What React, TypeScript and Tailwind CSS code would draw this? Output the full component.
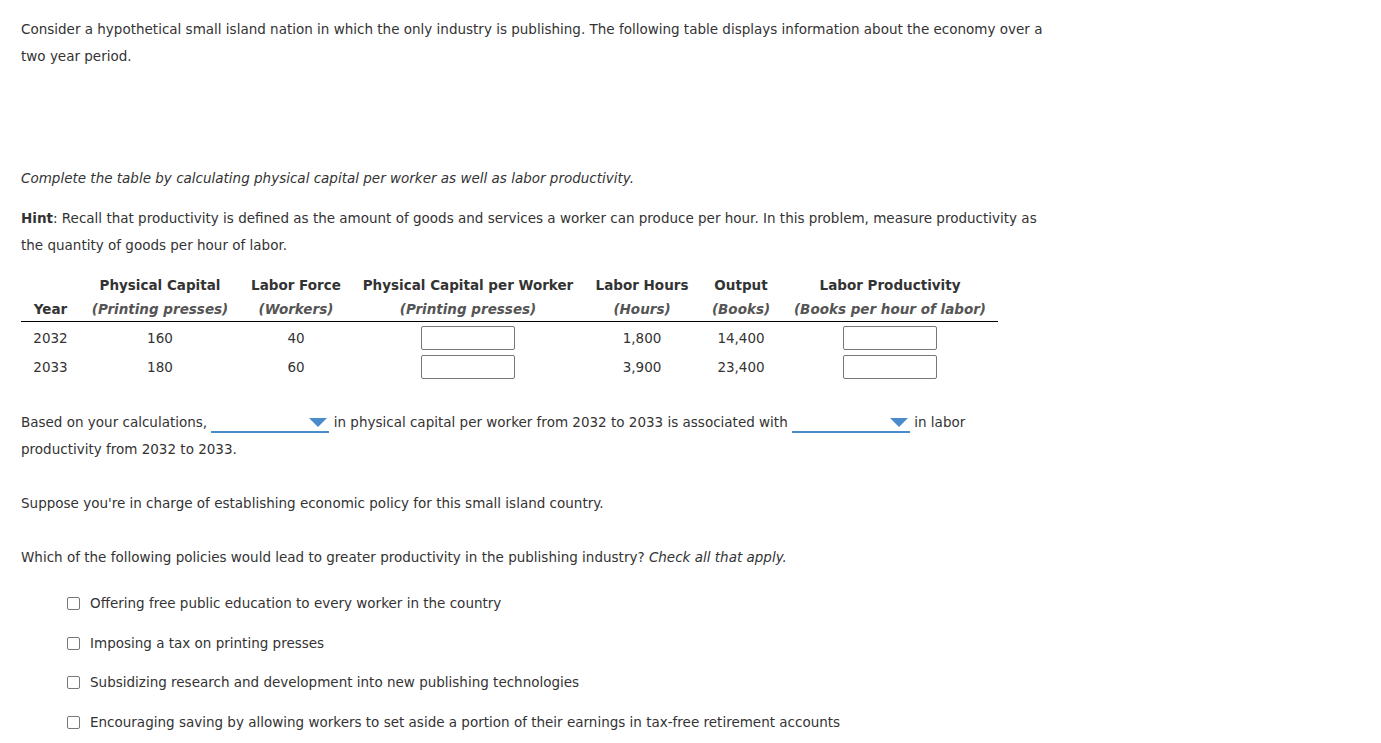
import React from 'react';

const Dropdown = () => (
  <span className="relative inline-block w-[118px] h-[18px] align-[-6px] border-b-2 border-[#4a8ccb]">
    <span className="absolute right-[2px] top-[3px] w-0 h-0 border-l-[9px] border-r-[9px] border-t-[9px] border-l-transparent border-r-transparent border-t-[#4a8ccb]" />
  </span>
);

const Box = () => (
  <div className="mx-auto w-[94px] h-[24px] border border-[#777] rounded-[2px] bg-white" />
);

const rows = [
  { year: '2032', cap: '160', lf: '40', hours: '1,800', out: '14,400' },
  { year: '2033', cap: '180', lf: '60', hours: '3,900', out: '23,400' },
];

const policies = [
  'Offering free public education to every worker in the country',
  'Imposing a tax on printing presses',
  'Subsidizing research and development into new publishing technologies',
  'Encouraging saving by allowing workers to set aside a portion of their earnings in tax-free retirement accounts',
];

export default function App() {
  return (
    <div className="min-h-screen bg-white text-[#333] text-[13.5px] leading-[27px] font-['DejaVu_Sans',Verdana,sans-serif] pl-[21px] pt-[16px]">
      <div className="w-[1024px]">
        <p>
          Consider a hypothetical small island nation in which the only industry is publishing. The following table displays information about the economy over a two year period.
        </p>

        <p className="mt-[95px] italic">Complete the table by calculating physical capital per worker as well as labor productivity.</p>

        <p className="mt-[13px]">
          <b>Hint</b>: Recall that productivity is defined as the amount of goods and services a worker can produce per hour. In this problem, measure productivity as the quantity of goods per hour of labor.
        </p>

        <table className="mt-[14px] border-collapse table-fixed w-[977px] text-center">
          <colgroup>
            <col className="w-[59px]" />
            <col className="w-[160px]" />
            <col className="w-[112px]" />
            <col className="w-[232px]" />
            <col className="w-[116px]" />
            <col className="w-[82px]" />
            <col className="w-[216px]" />
          </colgroup>
          <thead>
            <tr className="h-[24px] leading-[24px] font-bold">
              <th></th>
              <th>Physical Capital</th>
              <th>Labor Force</th>
              <th>Physical Capital per Worker</th>
              <th>Labor Hours</th>
              <th>Output</th>
              <th>Labor Productivity</th>
            </tr>
            <tr className="h-[24px] leading-[24px] border-b border-black">
              <th className="font-bold">Year</th>
              <th className="italic font-bold text-[#555]">(Printing presses)</th>
              <th className="italic font-bold text-[#555]">(Workers)</th>
              <th className="italic font-bold text-[#555]">(Printing presses)</th>
              <th className="italic font-bold text-[#555]">(Hours)</th>
              <th className="italic font-bold text-[#555]">(Books)</th>
              <th className="italic font-bold text-[#555]">(Books per hour of labor)</th>
            </tr>
          </thead>
          <tbody>
            {rows.map((r) => (
              <tr key={r.year} className="leading-[20px]">
                <td className="pt-[4px] pb-[1px] align-middle">{r.year}</td>
                <td className="pt-[4px] pb-[1px] align-middle">{r.cap}</td>
                <td className="pt-[4px] pb-[1px] align-middle">{r.lf}</td>
                <td className="pt-[4px] pb-[1px] align-middle"><Box /></td>
                <td className="pt-[4px] pb-[1px] align-middle">{r.hours}</td>
                <td className="pt-[4px] pb-[1px] align-middle">{r.out}</td>
                <td className="pt-[4px] pb-[1px] align-middle"><Box /></td>
              </tr>
            ))}
          </tbody>
        </table>

        <p className="mt-[29px]">
          Based on your calculations, <Dropdown /> in physical capital per worker from 2032 to 2033 is associated with <Dropdown /> in labor productivity from 2032 to 2033.
        </p>

        <p className="mt-[27px]">Suppose you're in charge of establishing economic policy for this small island country.</p>

        <p className="mt-[27px]">
          Which of the following policies would lead to greater productivity in the publishing industry? <span className="italic">Check all that apply.</span>
        </p>

        <div className="mt-[19px] pl-[46px] flex flex-col gap-[12.7px]">
          {policies.map((p) => (
            <label key={p} className="flex items-center gap-[10px]">
              <span className="w-[13px] h-[13px] border border-[#777] rounded-[2px] bg-white shrink-0" />
              <span>{p}</span>
            </label>
          ))}
        </div>
      </div>
    </div>
  );
}
